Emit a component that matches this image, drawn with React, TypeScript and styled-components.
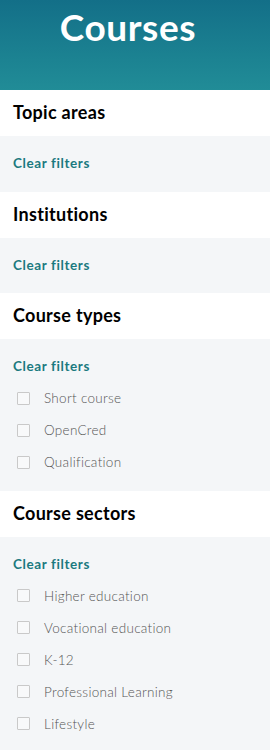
import { FC } from 'react';
import styled, { createGlobalStyle } from 'styled-components';

const GlobalStyle = createGlobalStyle`
  body {
    margin: 0;
    background: #fff;
    font-family: Lato, "Noto Sans", sans-serif;
  }
`

const Sidebar = styled.aside`
  width: 270px;
  display: flex;
  flex-direction: column;
`

const Header = styled.header`
  height: 90px;
  box-sizing: border-box;
  padding: 7px 14px 0 0;
  background: linear-gradient(180deg, #136f88 0%, #1b8191 60%, #218c97 100%);
  display: flex;
  justify-content: center;
`

const Title = styled.h1`
  margin: 0;
  color: #fff;
  font-size: 37px;
  font-weight: 700;
  line-height: 40px;
  letter-spacing: 0.6px;
`

const SectionTitle = styled.h2`
  margin: 0;
  height: 46px;
  box-sizing: border-box;
  padding: 0 13px 2px;
  display: flex;
  align-items: center;
  background: #fff;
  color: #000;
  font-size: 18px;
  font-weight: 700;
  letter-spacing: 0.3px;
`

const SectionBody = styled.div`
  background: #f4f6f8;
  padding: 19px 13px 12.5px;
  display: flex;
  flex-direction: column;
`

const ClearLink = styled.a`
  display: block;
  height: 16px;
  line-height: 16px;
  margin-bottom: 8px;
  color: #1b7a80;
  font-size: 13.5px;
  font-weight: 700;
  letter-spacing: 0.6px;
  text-decoration: none;
  cursor: pointer;
`

const Option = styled.label`
  height: 32px;
  display: flex;
  align-items: center;
  gap: 14px;
  padding-left: 4px;
  color: #555;
  font-size: 13.5px;
  font-weight: 300;
  letter-spacing: 0.3px;
  cursor: pointer;
`

const Box = styled.span`
  width: 11px;
  height: 11px;
  border: 1px solid #c9c9c9;
  background: #f8f9fa;
  border-radius: 1px;
  flex-shrink: 0;
`

interface FilterGroupProps {
  title: string,
  options?: string[],
}

const FilterGroup: FC<FilterGroupProps> = ({ title, options = [] }) => (
  <section>
    <SectionTitle>{title}</SectionTitle>
    <SectionBody>
      <ClearLink>Clear filters</ClearLink>
      {options.map(opt => (
        <Option key={opt}>
          <Box />
          {opt}
        </Option>
      ))}
    </SectionBody>
  </section>
)

const App: FC = () => {
  return <>
    <GlobalStyle />
    <Sidebar>
      <Header>
        <Title>Courses</Title>
      </Header>
      <FilterGroup title='Topic areas' />
      <FilterGroup title='Institutions' />
      <FilterGroup title='Course types' options={['Short course', 'OpenCred', 'Qualification']} />
      <FilterGroup
        title='Course sectors'
        options={['Higher education', 'Vocational education', 'K-12', 'Professional Learning', 'Lifestyle']}
      />
    </Sidebar>
  </>
}

export default App;
